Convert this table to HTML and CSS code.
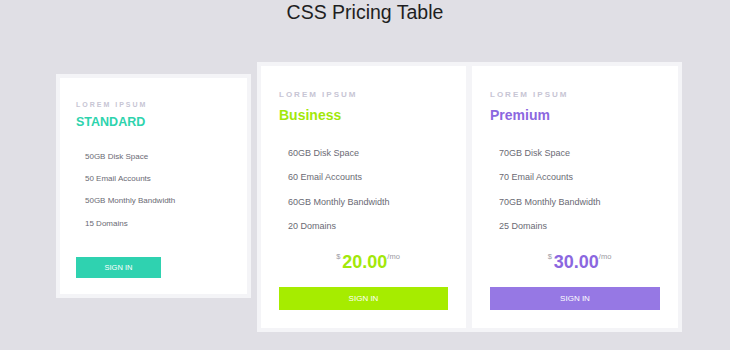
FILE: index.html
```html
<!DOCTYPE html>
<html lang="en">
<head>
<meta charset="utf-8">
<title>CSS Pricing Table</title>
<link rel="stylesheet" href="styles.css">
</head>
<body>
<h1 class="page-title">CSS Pricing Table</h1>
<div class="plans">
  <div class="plan plan-standard">
    <div class="eyebrow">LOREM IPSUM</div>
    <div class="plan-name">STANDARD</div>
    <ul class="features">
      <li>50GB Disk Space</li>
      <li>50 Email Accounts</li>
      <li>50GB Monthly Bandwidth</li>
      <li>15 Domains</li>
    </ul>
    <a class="btn" href="#">SIGN IN</a>
  </div>
  <div class="plan plan-big plan-business">
    <div class="eyebrow">LOREM IPSUM</div>
    <div class="plan-name">Business</div>
    <ul class="features">
      <li>60GB Disk Space</li>
      <li>60 Email Accounts</li>
      <li>60GB Monthly Bandwidth</li>
      <li>20 Domains</li>
    </ul>
    <div class="price"><span class="cur">$</span><span class="amount">20.00</span><span class="per">/mo</span></div>
    <a class="btn" href="#">SIGN IN</a>
  </div>
  <div class="plan plan-big plan-premium">
    <div class="eyebrow">LOREM IPSUM</div>
    <div class="plan-name">Premium</div>
    <ul class="features">
      <li>70GB Disk Space</li>
      <li>70 Email Accounts</li>
      <li>70GB Monthly Bandwidth</li>
      <li>25 Domains</li>
    </ul>
    <div class="price"><span class="cur">$</span><span class="amount">30.00</span><span class="per">/mo</span></div>
    <a class="btn" href="#">SIGN IN</a>
  </div>
</div>
</body>
</html>
```
FILE: styles.css
```css
* { box-sizing: border-box; }

html, body {
  margin: 0;
  padding: 0;
  background: #e0dfe5;
  font-family: "Liberation Sans", Arial, sans-serif;
}

.page-title {
  margin: 1px 0 0;
  font-size: 19.5px;
  line-height: 22px;
  font-weight: normal;
  color: #1e1e22;
  text-align: center;
}

.plans {
  display: flex;
  align-items: flex-start;
  padding: 39px 0 0 56px;
}

.plan {
  background: #fff;
  border: 4px solid #f4f4f7;
}

.plan-standard {
  width: 195px;
  margin-top: 12px;
  margin-right: 6px;
  padding: 22px 16px 16px;
}

.plan-big {
  width: 213px;
  padding: 22.5px 18px 18px;
}

.plan-premium {
  width: 214px;
  margin-left: -2px;
}

.eyebrow {
  color: #c7c5d4;
  font-weight: bold;
  font-size: 7px;
  line-height: 10px;
  letter-spacing: 2px;
}

.plan-name {
  margin-top: 4.3px;
  font-weight: bold;
  font-size: 12.5px;
  line-height: 16px;
}

.features {
  list-style: none;
  margin: 15.7px 0 0;
  padding: 0 0 0 9px;
  color: #6a6a74;
  font-size: 8px;
  line-height: 22.2px;
}

.btn {
  display: inline-block;
  margin-top: 22.7px;
  width: 85px;
  height: 21px;
  line-height: 21px;
  text-align: center;
  color: #fff;
  font-size: 7.5px;
  text-decoration: none;
}

.plan-big .eyebrow {
  font-size: 8px;
  line-height: 11px;
}

.plan-big .plan-name {
  margin-top: 6.7px;
  font-size: 14px;
  line-height: 18px;
}

.plan-big .features {
  margin-top: 16.5px;
  font-size: 9px;
  line-height: 24.5px;
}

.price {
  margin-top: 11px;
  padding-left: 9px;
  text-align: center;
  line-height: 24px;
  font-weight: bold;
}

.price .cur,
.price .per {
  color: #9a9aa2;
  font-weight: normal;
  font-size: 7.5px;
  vertical-align: top;
  line-height: 14px;
}

.price .cur { margin-right: 2px; }

.price .amount { font-size: 18px; }

.plan-big .btn {
  display: block;
  width: 100%;
  margin-top: 12.3px;
  height: 23px;
  line-height: 23px;
  font-size: 8px;
}

.plan-standard .plan-name { color: #2ed3ad; }
.plan-standard .btn { background: #2fd2b0; }

.plan-business .plan-name,
.plan-business .amount { color: #a2e80a; }
.plan-business .btn { background: #a6ec00; }

.plan-premium .plan-name,
.plan-premium .amount { color: #8b67df; }
.plan-premium .btn { background: #9678e4; }
```
